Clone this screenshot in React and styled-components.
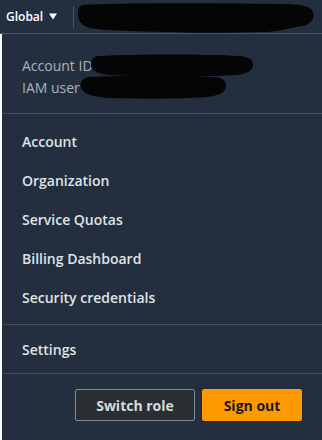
import styled, { createGlobalStyle } from "styled-components";

const GlobalStyle = createGlobalStyle`
    html, body {
        margin: 0;
        padding: 0;
        background: #ffffff;
    }
    body {
        font-family: "Open Sans", "Noto Sans", Arial, sans-serif;
    }
`;

const menuGroups = [
    ["Account", "Organization", "Service Quotas", "Billing Dashboard", "Security credentials"],
    ["Settings"],
];

// redaction marks, drawn by hand in the screenshot
const Scribble = ({ width, height, d }) => (
    <svg width={width} height={height} viewBox={`0 0 ${width} ${height}`}>
        <path d={d} fill="#050505" />
    </svg>
);

const App = () => {
    return (
        <>
            <GlobalStyle />
            <Page>
                <TopBar>
                    <RegionButton>
                        Global
                        <svg width="8" height="7" viewBox="0 0 8 7">
                            <path d="M0 0.5 L8 0.5 L4 6.5 Z" fill="#ffffff" />
                        </svg>
                    </RegionButton>
                    <BarSeparator />
                    <TopRedaction>
                        <Scribble
                            width={238}
                            height={31}
                            d="M6 3 C40 1 120 1 200 2 C225 2 234 4 236 10 C238 17 234 22 226 24 C210 26 205 29 190 30 C150 31 110 31 90 30 C60 29 40 29 20 27 C8 26 2 22 1 14 C0 7 2 4 6 3 Z"
                        />
                    </TopRedaction>
                </TopBar>
                <Body>
                    <Gutter />
                    <Panel>
                        <InfoBlock>
                            <InfoLine>
                                Account ID
                                <InlineRedaction $shift={-3}>
                                    <Scribble
                                        width={164}
                                        height={23}
                                        d="M8 2 C50 0 110 0 150 2 C160 3 164 7 163 12 C162 17 156 20 146 21 C110 23 60 23 20 21 C8 20 2 17 1 12 C0 6 3 3 8 2 Z"
                                    />
                                </InlineRedaction>
                            </InfoLine>
                            <InfoLine>
                                IAM user
                                <InlineRedaction $shift={-1}>
                                    <Scribble
                                        width={148}
                                        height={25}
                                        d="M10 2 C50 0 100 0 136 2 C145 3 148 7 147 12 C146 18 138 21 128 22 C100 24 60 24 30 23 C14 22 5 19 2 13 C0 7 4 3 10 2 Z"
                                    />
                                </InlineRedaction>
                            </InfoLine>
                        </InfoBlock>
                        <Divider />
                        <MenuGroup $top={8} $bottom={7}>
                            {menuGroups[0].map((label) => (
                                <MenuItem key={label}>{label}</MenuItem>
                            ))}
                        </MenuGroup>
                        <Divider />
                        <MenuGroup $top={5} $bottom={4}>
                            {menuGroups[1].map((label) => (
                                <MenuItem key={label}>{label}</MenuItem>
                            ))}
                        </MenuGroup>
                        <Divider />
                        <Actions>
                            <ActionButton $variant="normal">Switch role</ActionButton>
                            <ActionButton $variant="primary">Sign out</ActionButton>
                        </Actions>
                    </Panel>
                </Body>
            </Page>
        </>
    );
};

export default App;

const Page = styled.div`
    width: 322px;
    height: 440px;
    display: flex;
    flex-direction: column;
    overflow: hidden;
`;

const TopBar = styled.header`
    height: 33px;
    flex-shrink: 0;
    display: flex;
    align-items: center;
    padding-left: 6px;
    background-color: #232f3e;
    border-bottom: 1px solid #4a5564;
`;

const RegionButton = styled.div`
    display: flex;
    align-items: center;
    gap: 6px;
    color: #ffffff;
    font-size: 12px;
    font-weight: 600;
    width: 67px;
`;

const BarSeparator = styled.div`
    width: 1px;
    height: 22px;
    background-color: #485363;
    margin-right: 3px;
`;

const TopRedaction = styled.div`
    display: flex;
    margin-top: 1px;
`;

const Body = styled.div`
    flex: 1;
    display: flex;
`;

const Gutter = styled.div`
    width: 2px;
    background-color: #ffffff;
`;

const Panel = styled.div`
    flex: 1;
    display: flex;
    flex-direction: column;
    background-color: #232f3e;
`;

const InfoBlock = styled.div`
    padding: 20px 20px 15px;
    display: flex;
    flex-direction: column;
`;

const InfoLine = styled.div`
    display: flex;
    align-items: center;
    height: 22px;
    color: #aab3be;
    font-size: 14px;
    white-space: nowrap;
`;

const InlineRedaction = styled.span`
    display: inline-flex;
    margin-left: ${(p) => p.$shift}px;
`;

const Divider = styled.div`
    height: 1px;
    background-color: #434e5c;
`;

const MenuGroup = styled.nav`
    display: flex;
    flex-direction: column;
    padding-top: ${(p) => p.$top}px;
    padding-bottom: ${(p) => p.$bottom}px;
`;

const MenuItem = styled.div`
    height: 39px;
    display: flex;
    align-items: center;
    padding-left: 20px;
    color: #dfe3e8;
    font-size: 14px;
    font-weight: 600;
`;

const Actions = styled.div`
    display: flex;
    justify-content: flex-end;
    gap: 7px;
    padding: 15px 20px 0;
`;

const ActionButton = styled.button`
    height: 32px;
    width: ${(p) => (p.$variant === "primary" ? "100px" : "120px")};
    border-radius: 2px;
    font-family: inherit;
    font-size: 14px;
    font-weight: 700;
    cursor: pointer;
    border: 1px solid ${(p) => (p.$variant === "primary" ? "#ff9900" : "#7d8998")};
    background-color: ${(p) => (p.$variant === "primary" ? "#ff9900" : "#2a2e33")};
    color: ${(p) => (p.$variant === "primary" ? "#16191f" : "#d5dbdb")};
`;
